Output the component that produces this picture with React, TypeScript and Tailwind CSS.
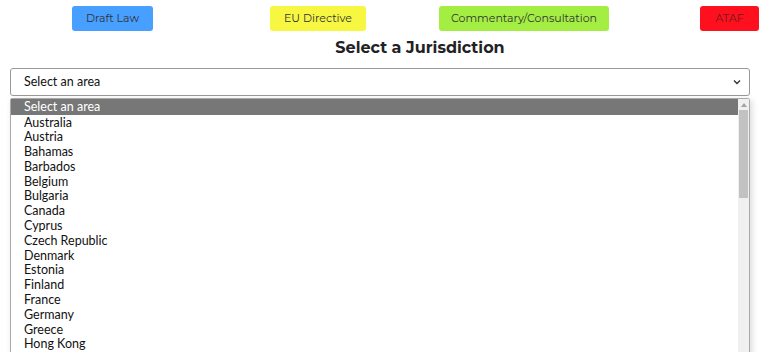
const areas = [
  'Australia',
  'Austria',
  'Bahamas',
  'Barbados',
  'Belgium',
  'Bulgaria',
  'Canada',
  'Cyprus',
  'Czech Republic',
  'Denmark',
  'Estonia',
  'Finland',
  'France',
  'Germany',
  'Greece',
  'Hong Kong',
];

const heading = { fontFamily: 'Montserrat, Inter, "Open Sans", sans-serif' };
const listFont = { fontFamily: '"Segoe UI", Lato, "Open Sans", sans-serif' };

function Legend() {
  return (
    <div className="flex items-center h-[25px] mt-[6px] text-[11px] text-[#333]" style={heading}>
      <div className="ml-[72px] w-[81px] h-full rounded-[3px] bg-[#479fff] flex items-center justify-center">Draft Law</div>
      <div className="ml-[117px] w-[96px] h-full rounded-[3px] bg-[#f7f742] flex items-center justify-center">EU Directive</div>
      <div className="ml-[73px] w-[170px] h-full rounded-[3px] bg-[#a4ee44] flex items-center justify-center">Commentary/Consultation</div>
      <div className="ml-[91px] w-[59px] h-full rounded-[3px] bg-[#ff101e] flex items-center justify-center text-[#6e1a1f]">ATAF</div>
    </div>
  );
}

export default function App() {
  return (
    <div className="w-[768px] h-[352px] overflow-hidden bg-white">
      <Legend />
      <h1 className="mt-[6px] ml-[72px] text-center text-[16px] font-bold text-[#222] leading-[22px]" style={heading}>
        Select a Jurisdiction
      </h1>
      <div className="ml-[10px] w-[740px] mt-[9px]">
        <div
          className="h-[28px] border border-[#999] rounded-[3px] flex items-center justify-between pl-[13px] pr-[8px] text-[12.5px] text-[#111]"
          style={listFont}
        >
          <span>Select an area</span>
          <svg width="8" height="6" viewBox="0 0 8 6" fill="none">
            <path d="M1 1.5 L4 4.5 L7 1.5" stroke="#333" strokeWidth="1.4" />
          </svg>
        </div>
        <div className="mt-[2px] h-[260px] border border-[#aaa] rounded-t-[2px] shadow-[2px_2px_6px_rgba(0,0,0,0.15)] flex" style={listFont}>
          <div className="flex-1 text-[12.5px] text-[#111] overflow-hidden">
            <div className="h-[15.5px] bg-[#777] text-white pl-[13px] leading-[15.5px]">Select an area</div>
            {areas.map((a) => (
              <div key={a} className="h-[14.8px] pl-[13px] leading-[15.6px]">
                {a}
              </div>
            ))}
          </div>
          <div className="w-[11px] bg-[#f0f0f0] flex flex-col items-center">
            <div className="h-[11px] flex items-center justify-center">
              <svg width="6" height="4" viewBox="0 0 6 4">
                <path d="M0 4 L3 0 L6 4 Z" fill="#a3a3a3" />
              </svg>
            </div>
            <div className="w-[9px] h-[88px] bg-[#c2c2c2]" />
          </div>
        </div>
      </div>
    </div>
  );
}
